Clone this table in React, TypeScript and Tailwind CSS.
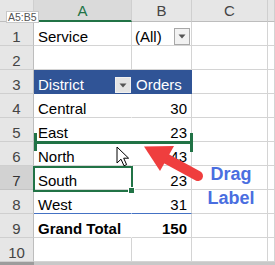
import React from "react";

const base = "flex items-end overflow-hidden whitespace-nowrap border-b border-r";
const plain = `${base} bg-white border-b-[#d4d4d4] border-r-[#d4d4d4]`;
const rowHead =
  "flex items-end justify-center border-b border-r bg-[#e6e6e6] border-b-[#cfcfcf] border-r-[#bdbdbd] text-[#444]";
const colHead =
  "flex items-center justify-center border-b border-r bg-[#e6e6e6] border-b-[#bdbdbd] border-r-[#cfcfcf] text-[#444]";

const Drop: React.FC<{ onBlue?: boolean }> = ({ onBlue }) => (
  <div
    className={
      onBlue
        ? "mb-0 flex h-[16px] w-[16px] shrink-0 items-center justify-center border border-[#f0f0f0] bg-[#e4e4e4]"
        : "mb-0 mr-[1px] flex h-[17px] w-[16px] shrink-0 items-center justify-center border border-[#a8a8a8] bg-[#f2f2f2]"
    }
  >
    <svg width="8" height="5" viewBox="0 0 8 5">
      <polygon points="0.5,0.5 7.5,0.5 4,4.5" fill="#555" />
    </svg>
  </div>
);

const data = [
  { n: 4, a: "Central", b: "30" },
  { n: 5, a: "East", b: "23" },
  { n: 6, a: "North", b: "43" },
  { n: 7, a: "South", b: "23" },
  { n: 8, a: "West", b: "31" },
];

const App: React.FC = () => {
  return (
    <div className="relative h-[265px] w-[275px] overflow-hidden bg-white font-['Liberation_Sans',Arial,sans-serif] text-[15px] leading-[17px] text-black">
      <div className="grid grid-cols-[34px_98px_60px_76px_7px] grid-rows-[22px_repeat(10,24px)_3px]">
        {/* column headers */}
        <div className={colHead}></div>
        <div className="flex items-center justify-center border-r border-b-2 border-r-[#cfcfcf] border-b-[#217346] bg-[#dadada] text-[#217346]">
          A
        </div>
        <div className={colHead}>B</div>
        <div className={colHead}>C</div>
        <div className={colHead}></div>

        {/* row 1 */}
        <div className={rowHead}>1</div>
        <div className={`${plain} pl-1`}>Service</div>
        <div className={`${plain} justify-between pl-[3px]`}>
          <span>(All)</span>
          <Drop />
        </div>
        <div className={plain}></div>
        <div className={plain}></div>

        {/* row 2 */}
        <div className={rowHead}>2</div>
        <div className={plain}></div>
        <div className={plain}></div>
        <div className={plain}></div>
        <div className={plain}></div>

        {/* row 3 - pivot header */}
        <div className={rowHead}>3</div>
        <div className={`${base} justify-between bg-[#305496] border-b-[#305496] border-r-[#305496] pl-1 text-white`}>
          <span>District</span>
          <Drop onBlue />
        </div>
        <div className={`${base} bg-[#305496] border-b-[#305496] border-r-[#305496] pl-[4px] text-white`}>
          Orders
        </div>
        <div className={plain}></div>
        <div className={plain}></div>

        {data.map((r) => (
          <React.Fragment key={r.n}>
            <div
              className={
                r.n === 7
                  ? "flex items-end justify-center border-b border-r bg-[#d2d2d2] border-b-[#c4c4c4] border-r-[#bdbdbd] text-[#333]"
                  : rowHead
              }
            >
              {r.n}
            </div>
            <div
              className={
                r.n === 8
                  ? `${base} bg-white border-b-[#4472c4] border-r-white pl-1`
                  : `${base} bg-white border-b-[#d4d4d4] border-r-white pl-1`
              }
            >
              {r.a}
            </div>
            <div
              className={
                r.n === 8
                  ? `${base} justify-end bg-white border-b-[#4472c4] border-r-[#d4d4d4] pr-1`
                  : `${plain} justify-end pr-1`
              }
            >
              {r.b}
            </div>
            <div className={plain}></div>
            <div className={plain}></div>
          </React.Fragment>
        ))}

        {/* row 9 - grand total */}
        <div className={rowHead}>9</div>
        <div className={`${base} bg-white border-b-[#d4d4d4] border-r-white pl-1 font-bold`}>Grand Total</div>
        <div className={`${plain} justify-end pr-1 font-bold`}>150</div>
        <div className={plain}></div>
        <div className={plain}></div>

        {/* row 10 */}
        <div className={rowHead}>10</div>
        <div className={plain}></div>
        <div className={plain}></div>
        <div className={plain}></div>
        <div className={plain}></div>

        {/* bottom edge */}
        <div className="bg-[#9c9c9c]"></div>
        <div className="col-span-4 bg-[#c8c8c8]"></div>
      </div>

      {/* name box */}
      <div className="absolute left-[6px] top-[11px] h-[12px] w-[33px] overflow-hidden whitespace-nowrap border border-[#c8c8c8] bg-white pl-[1px] text-[10.5px] leading-[10px] text-[#555]">
        A5:B5
      </div>

      {/* insert bar while dragging */}
      <div className="absolute left-[34px] top-[141px] h-[3px] w-[159px] bg-[#217346]"></div>
      <div className="absolute left-[34px] top-[133px] h-[18px] w-[3px] bg-[#217346]"></div>
      <div className="absolute left-[190px] top-[133px] h-[19px] w-[3px] bg-[#217346]"></div>

      {/* active selection */}
      <div className="absolute left-[33px] top-[166px] h-[26px] w-[100px] border-2 border-[#217346]"></div>
      <div className="absolute left-[128px] top-[187px] h-[7px] w-[7px] border border-white bg-[#217346]"></div>

      {/* mouse pointer */}
      <svg className="absolute left-[116px] top-[146px]" width="14" height="21" viewBox="0 0 14 21">
        <path
          d="M1 1 L1 17 L5 13.2 L8 19.8 L10.6 18.6 L7.7 12.2 L12.6 12.2 Z"
          fill="#fff"
          stroke="#000"
          strokeWidth="1"
          strokeLinejoin="round"
        />
      </svg>

      {/* red arrow */}
      <svg className="pointer-events-none absolute left-0 top-0" width="275" height="265" viewBox="0 0 275 265">
        <line x1="165" y1="158" x2="198" y2="176" stroke="#ef3e3e" strokeWidth="10" strokeLinecap="round" />
        <polygon points="144,146.5 174,146 160,171" fill="#ef3e3e" />
      </svg>

      {/* annotation */}
      <div className="absolute left-[196px] top-[162px] w-[70px] text-center text-[18px] font-bold leading-[24px] text-[#4a6ee0]">
        Drag
        <br />
        Label
      </div>
    </div>
  );
};

export default App;
